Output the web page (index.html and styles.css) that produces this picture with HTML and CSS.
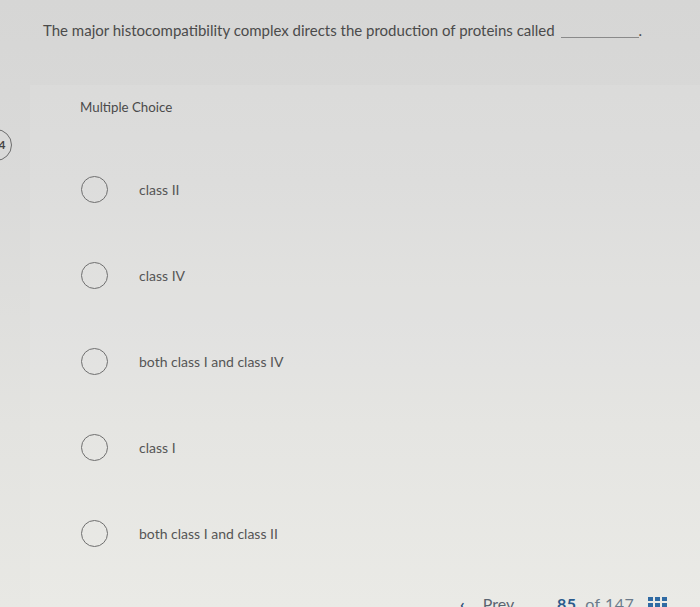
FILE: index.html
```html
<!DOCTYPE html>
<html lang="en">
<head>
<meta charset="utf-8">
<title>Multiple Choice</title>
<link rel="stylesheet" href="styles.css">
</head>
<body>
<div class="page">
  <p class="question">The major histocompatibility complex directs the production of proteins called <span class="blank"></span>.</p>
  <section class="card">
    <div class="badge">4</div>
    <div class="kind">Multiple Choice</div>
    <ul class="options">
      <li class="option"><span class="radio"></span><span class="text">class II</span></li>
      <li class="option"><span class="radio"></span><span class="text">class IV</span></li>
      <li class="option"><span class="radio"></span><span class="text">both class I and class IV</span></li>
      <li class="option"><span class="radio"></span><span class="text">class I</span></li>
      <li class="option"><span class="radio"></span><span class="text">both class I and class II</span></li>
    </ul>
    <nav class="pager">
      <span class="prev"><span class="chev">&#8249;</span> Prev</span>
      <span class="count"><b>85</b> of 147</span>
      <span class="grid">
        <svg width="19" height="16" viewBox="0 0 19 16">
          <rect x="0" y="0" width="5" height="4" fill="#2f6aa3"/>
          <rect x="7" y="0" width="5" height="4" fill="#2f6aa3"/>
          <rect x="14" y="0" width="5" height="4" fill="#2f6aa3"/>
          <rect x="0" y="6" width="5" height="4" fill="#2f6aa3"/>
          <rect x="7" y="6" width="5" height="4" fill="#2f6aa3"/>
          <rect x="14" y="6" width="5" height="4" fill="#2f6aa3"/>
          <rect x="0" y="12" width="5" height="4" fill="#2f6aa3"/>
          <rect x="7" y="12" width="5" height="4" fill="#2f6aa3"/>
          <rect x="14" y="12" width="5" height="4" fill="#2f6aa3"/>
        </svg>
      </span>
    </nav>
  </section>
</div>
</body>
</html>
```

FILE: styles.css
```css
html, body {
  margin: 0;
  padding: 0;
}
body {
  width: 700px;
  height: 607px;
  overflow: hidden;
  background: linear-gradient(180deg, #d6d6d5 0%, #dadad9 30%, #e3e3e0 70%, #e8e8e4 100%);
  font-family: "Lato", "Liberation Sans", sans-serif;
  color: #4a4a4a;
}
.page {
  display: flex;
  flex-direction: column;
}
.question {
  margin: 0;
  padding: 20px 0 0 43px;
  height: 65px;
  font-size: 15px;
  line-height: 20px;
  color: #4b4b4b;
}
.blank {
  display: inline-block;
  width: 78px;
  border-bottom: 1px solid #8a8a8a;
  vertical-align: -2px;
  margin-left: 2px;
}
.card {
  position: relative;
  margin-left: 30px;
  padding: 14px 0 0 50px;
  background: rgba(255, 255, 255, 0.09);
  display: flex;
  flex-direction: column;
}
.badge {
  position: absolute;
  left: -50px;
  top: 44px;
  width: 32px;
  height: 32px;
  box-sizing: border-box;
  padding-left: 12px;
  border: 1.5px solid #6d6d6d;
  border-radius: 50%;
  font-size: 12px;
  font-weight: 700;
  line-height: 29px;
  text-align: center;
  color: #444;
}
.kind {
  font-size: 13.3px;
  line-height: 16px;
  color: #4a4a4a;
}
.options {
  list-style: none;
  margin: 60px 0 0 0;
  padding: 0;
  display: flex;
  flex-direction: column;
  gap: 58px;
}
.option {
  display: flex;
  align-items: center;
  height: 28px;
}
.radio {
  width: 27px;
  height: 27px;
  box-sizing: border-box;
  border: 1.7px solid #6f6f6f;
  border-radius: 50%;
  margin-left: 1px;
}
.text {
  margin-left: 31px;
  font-size: 14px;
  color: #555;
}
.pager {
  display: flex;
  align-items: flex-start;
  margin-top: 47px;
  padding-left: 380px;
  font-size: 16px;
  line-height: 20px;
  height: 20px;
}
.prev {
  color: #5a6470;
  width: 97px;
}
.chev {
  color: #2c4f78;
  font-weight: 700;
  margin-right: 14px;
}
.count {
  color: #6b7a8a;
  width: 91px;
  letter-spacing: 0.5px;
}
.count b {
  color: #2a5a8c;
  margin-right: 4px;
}
.grid {
  padding-top: 3px;
}
```
